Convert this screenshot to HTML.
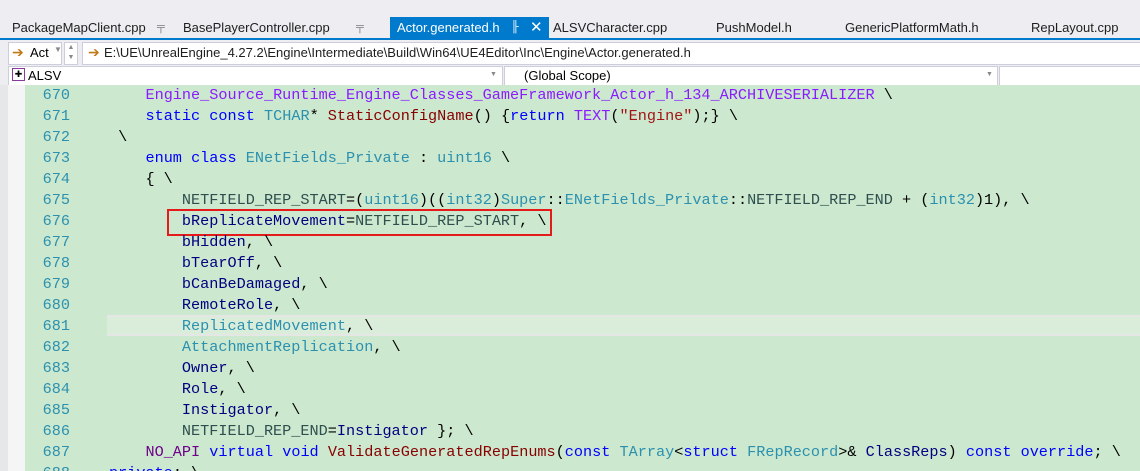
<!DOCTYPE html>
<html style="margin:0;width:1140px;height:471px;overflow:hidden"><head><meta charset="utf-8"><style>
body{margin:0;width:1140px;height:471px;overflow:hidden;background:#EEEEF2;font-family:"Liberation Sans",sans-serif;position:relative}
.abs{position:absolute}
.tab{position:absolute;top:17px;height:21px;font-size:13px;line-height:21px;color:#1E1E1E}
.code{position:absolute;left:25px;top:85px;width:1115px;height:386px;background:#CCE8CF}
.ln{position:absolute;left:25px;width:45px;text-align:right;color:#2B91AF;font-family:"Liberation Mono",monospace;font-size:15.2px;line-height:21px}
.cl{position:absolute;left:109px;white-space:pre;font-family:"Liberation Mono",monospace;font-size:15.2px;line-height:21px;color:#000}
.k{color:#0000FF}.m{color:#8A1BFF}.t{color:#2B91AF}.f{color:#880000}.s{color:#A31515}.g{color:#2F4F4F}.n{color:#000080}.mc{color:#6F008A}
.pin{position:absolute;top:22px;width:6px;height:6px;border:1px solid #777;border-bottom:none}
</style></head><body>
<div class="tab" style="left:12px">PackageMapClient.cpp</div>
<div class="tab" style="left:157px;color:#777;font-size:11px">╤</div>
<div class="tab" style="left:183px">BasePlayerController.cpp</div>
<div class="tab" style="left:356px;color:#777;font-size:11px">╤</div>
<div class="abs" style="left:390px;top:17px;width:159px;height:21px;background:#007ACC"></div>
<div class="tab" style="left:397px;color:#fff">Actor.generated.h</div>
<div class="tab" style="left:511px;color:#fff;font-size:11px">╟</div>
<div class="tab" style="left:530px;color:#fff;font-size:15px">✕</div>
<div class="tab" style="left:553px">ALSVCharacter.cpp</div>
<div class="tab" style="left:716px">PushModel.h</div>
<div class="tab" style="left:845px">GenericPlatformMath.h</div>
<div class="tab" style="left:1031px">RepLayout.cpp</div>
<div class="abs" style="left:0;top:38px;width:1140px;height:2px;background:#007ACC"></div>
<div class="abs" style="left:8px;top:42px;width:52px;height:21px;background:#fff;border:1px solid #CCCEDB"></div>
<div class="abs" style="left:12px;top:44px;font-size:14px;color:#C07A1A">➔</div>
<div class="abs" style="left:30px;top:45px;font-size:13px">Act</div>
<div class="abs" style="left:54px;top:45px;font-size:8px;color:#888">▼</div>
<div class="abs" style="left:64px;top:42px;width:12px;height:21px;background:#fff;border:1px solid #CCCEDB;font-size:7px;color:#888;line-height:10px;text-align:center">▲<br>▼</div>
<div class="abs" style="left:82px;top:42px;width:1058px;height:21px;background:#fff;border:1px solid #CCCEDB"></div>
<div class="abs" style="left:88px;top:44px;font-size:14px;color:#C07A1A">➔</div>
<div class="abs" style="left:104px;top:45px;font-size:13px;color:#1E1E1E">E:\UE\UnrealEngine_4.27.2\Engine\Intermediate\Build\Win64\UE4Editor\Inc\Engine\Actor.generated.h</div>
<div class="abs" style="left:8px;top:66px;width:493px;height:19px;background:#fff;border:1px solid #CCCEDB"></div>
<div class="abs" style="left:12px;top:68px;width:11px;height:11px;border:1px solid #8A3A9A;font-size:9px;line-height:11px;text-align:center">✚</div>
<div class="abs" style="left:28px;top:68px;font-size:13px">ALSV</div>
<div class="abs" style="left:490px;top:71px;font-size:7px;color:#888">▼</div>
<div class="abs" style="left:504px;top:66px;width:492px;height:19px;background:#fff;border:1px solid #CCCEDB"></div>
<div class="abs" style="left:524px;top:68px;font-size:13px">(Global Scope)</div>
<div class="abs" style="left:986px;top:71px;font-size:7px;color:#888">▼</div>
<div class="abs" style="left:999px;top:66px;width:141px;height:19px;background:#fff;border:1px solid #CCCEDB"></div>
<div class="abs" style="left:0;top:85px;width:8px;height:386px;background:#E6E7E8"></div>
<div class="abs" style="left:8px;top:85px;width:17px;height:386px;background:#F5F5F5"></div>
<div class="code"></div>
<div class="abs" style="left:107px;top:315px;width:1033px;height:17px;background:#D9EDDA;border-top:2px solid #E4E7E4;border-bottom:2px solid #E4E7E4"></div>
<div class="abs" style="left:167px;top:209px;width:381px;height:23px;border:2px solid #E51A1A"></div>
<div style="position:absolute;left:0;top:0;width:1140px;height:471px;overflow:hidden">
<div class="ln" style="top:85px">670</div><div class="cl" style="top:85px">    <span class="m">Engine_Source_Runtime_Engine_Classes_GameFramework_Actor_h_134_ARCHIVESERIALIZER</span> \</div>
<div class="ln" style="top:106px">671</div><div class="cl" style="top:106px">    <span class="k">static</span> <span class="k">const</span> <span class="t">TCHAR</span>* <span class="f">StaticConfigName</span>() {<span class="k">return</span> <span class="m">TEXT</span>(<span class="s">"Engine"</span>);} \</div>
<div class="ln" style="top:127px">672</div><div class="cl" style="top:127px"> \</div>
<div class="ln" style="top:148px">673</div><div class="cl" style="top:148px">    <span class="k">enum</span> <span class="k">class</span> <span class="t">ENetFields_Private</span> : <span class="t">uint16</span> \</div>
<div class="ln" style="top:169px">674</div><div class="cl" style="top:169px">    { \</div>
<div class="ln" style="top:190px">675</div><div class="cl" style="top:190px">        <span class="g">NETFIELD_REP_START</span>=(<span class="t">uint16</span>)((<span class="t">int32</span>)<span class="t">Super</span>::<span class="t">ENetFields_Private</span>::<span class="g">NETFIELD_REP_END</span> + (<span class="t">int32</span>)1), \</div>
<div class="ln" style="top:211px">676</div><div class="cl" style="top:211px">        <span class="n">bReplicateMovement</span>=<span class="g">NETFIELD_REP_START</span>, \</div>
<div class="ln" style="top:232px">677</div><div class="cl" style="top:232px">        <span class="n">bHidden</span>, \</div>
<div class="ln" style="top:253px">678</div><div class="cl" style="top:253px">        <span class="n">bTearOff</span>, \</div>
<div class="ln" style="top:274px">679</div><div class="cl" style="top:274px">        <span class="n">bCanBeDamaged</span>, \</div>
<div class="ln" style="top:295px">680</div><div class="cl" style="top:295px">        <span class="n">RemoteRole</span>, \</div>
<div class="ln" style="top:316px">681</div><div class="cl" style="top:316px">        <span class="t">ReplicatedMovement</span>, \</div>
<div class="ln" style="top:337px">682</div><div class="cl" style="top:337px">        <span class="t">AttachmentReplication</span>, \</div>
<div class="ln" style="top:358px">683</div><div class="cl" style="top:358px">        <span class="n">Owner</span>, \</div>
<div class="ln" style="top:379px">684</div><div class="cl" style="top:379px">        <span class="n">Role</span>, \</div>
<div class="ln" style="top:400px">685</div><div class="cl" style="top:400px">        <span class="n">Instigator</span>, \</div>
<div class="ln" style="top:421px">686</div><div class="cl" style="top:421px">        <span class="g">NETFIELD_REP_END</span>=<span class="n">Instigator</span> }; \</div>
<div class="ln" style="top:442px">687</div><div class="cl" style="top:442px">    <span class="mc">NO_API</span> <span class="k">virtual</span> <span class="k">void</span> <span class="f">ValidateGeneratedRepEnums</span>(<span class="k">const</span> <span class="t">TArray</span>&lt;<span class="k">struct</span> <span class="t">FRepRecord</span>&gt;&amp; <span class="n">ClassReps</span>) <span class="k">const</span> <span class="k">override</span>; \</div>
<div class="ln" style="top:463px">688</div><div class="cl" style="top:463px"><span class="k">private</span>: \</div>
</div>
</body></html>
